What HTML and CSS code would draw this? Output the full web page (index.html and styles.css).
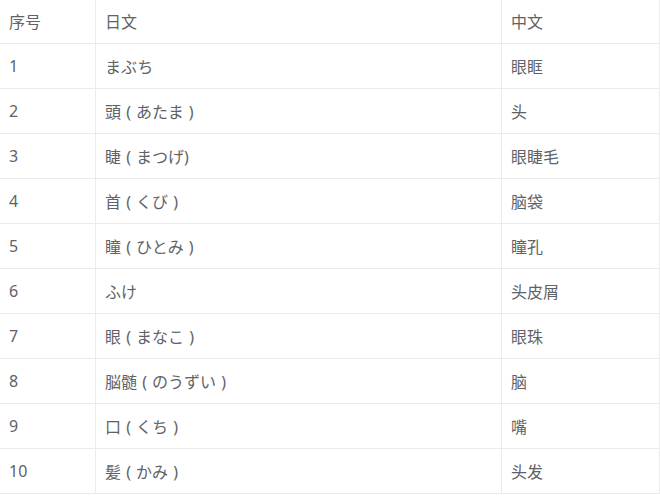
FILE: index.html
```html
<!DOCTYPE html>
<html lang="zh">
<head>
<meta charset="utf-8">
<link rel="stylesheet" href="styles.css">
</head>
<body>
<table class="vocab">
  <colgroup>
    <col class="c-no">
    <col class="c-ja">
    <col class="c-zh">
  </colgroup>
  <thead>
    <tr><th>序号</th><th>日文</th><th>中文</th></tr>
  </thead>
  <tbody>
    <tr><td>1</td><td class="ja">まぶち</td><td>眼眶</td></tr>
    <tr><td>2</td><td class="ja">頭 ( あたま )</td><td>头</td></tr>
    <tr><td>3</td><td class="ja">睫 ( まつげ)</td><td>眼睫毛</td></tr>
    <tr><td>4</td><td class="ja">首 ( くび )</td><td>脑袋</td></tr>
    <tr><td>5</td><td class="ja">瞳 ( ひとみ )</td><td>瞳孔</td></tr>
    <tr><td>6</td><td class="ja">ふけ</td><td>头皮屑</td></tr>
    <tr><td>7</td><td class="ja">眼 ( まなこ )</td><td>眼珠</td></tr>
    <tr><td>8</td><td class="ja">脳髄 ( のうずい )</td><td>脑</td></tr>
    <tr><td>9</td><td class="ja">口 ( くち )</td><td>嘴</td></tr>
    <tr><td>10</td><td class="ja">髪 ( かみ )</td><td>头发</td></tr>
  </tbody>
</table>
</body>
</html>
```
FILE: styles.css
```css
html, body {
  margin: 0;
  padding: 0;
  background: #fff;
}
body {
  font-family: "Noto Sans", "Noto Sans CJK SC", sans-serif;
  color: #606266;
  font-size: 16px;
  overflow: hidden;
}
.vocab {
  border-collapse: collapse;
  table-layout: fixed;
  width: 660px;
  margin: -2px 0 0 -1px;
}
.c-no { width: 96px; }
.c-ja { width: 406px; }
.c-zh { width: 158px; }
.vocab th,
.vocab td {
  border: 1px solid #ebebeb;
  height: 45px;
  padding: 0 9px;
  text-align: left;
  font-weight: normal;
  vertical-align: middle;
  white-space: nowrap;
  box-sizing: border-box;
}
.vocab .ja {
  word-spacing: 1px;
}
```
